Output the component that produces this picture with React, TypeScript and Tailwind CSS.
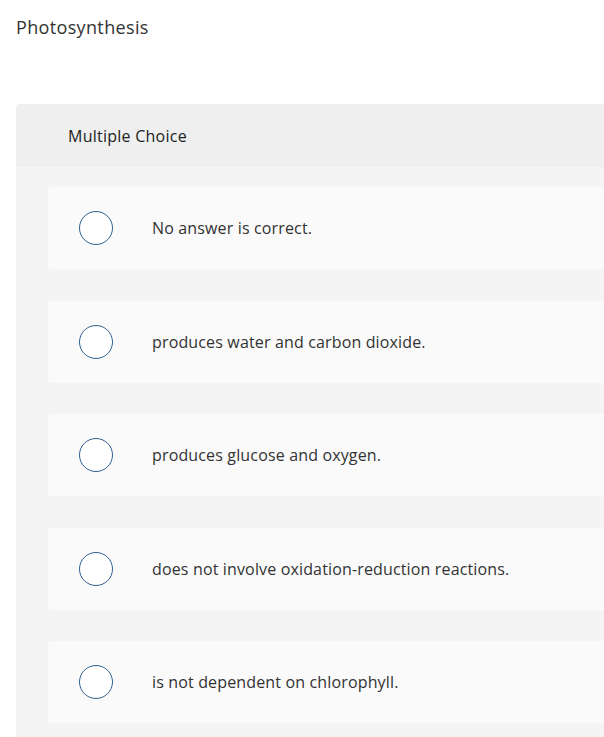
import React from "react";

const options = [
  "No answer is correct.",
  "produces water and carbon dioxide.",
  "produces glucose and oxygen.",
  "does not involve oxidation-reduction reactions.",
  "is not dependent on chlorophyll.",
];

export default function App() {
  return (
    <div
      className="w-[604px] h-[737px] overflow-hidden bg-white text-[#333]"
      style={{ fontFamily: "'Open Sans', Arial, sans-serif" }}
    >
      <div className="pl-4 pt-[15px] h-[104px]">
        <h1 className="text-[18px] leading-[24px] font-normal tracking-[0.35px] text-[#333]">Photosynthesis</h1>
      </div>
      <div className="ml-4 w-[620px] rounded-tl-[4px] bg-[#f4f4f4]">
        <div className="h-[63px] bg-[#efefef] rounded-tl-[4px] flex items-center pl-[52px]">
          <span className="text-[16px] tracking-[0.25px] text-[#222]">Multiple Choice</span>
        </div>
        <div className="pt-5 pl-8 flex flex-col gap-[31.5px] pb-4">
          {options.map((o) => (
            <div key={o} className="h-[82px] rounded-[4px] bg-[#fafafa] flex items-center">
              <div className="ml-[31px] w-[34px] h-[34px] rounded-full border-[1.5px] border-[#2f5f90] bg-white shrink-0" />
              <span className="ml-[39px] text-[16px] tracking-[0.15px] text-[#333]">{o}</span>
            </div>
          ))}
        </div>
      </div>
    </div>
  );
}
